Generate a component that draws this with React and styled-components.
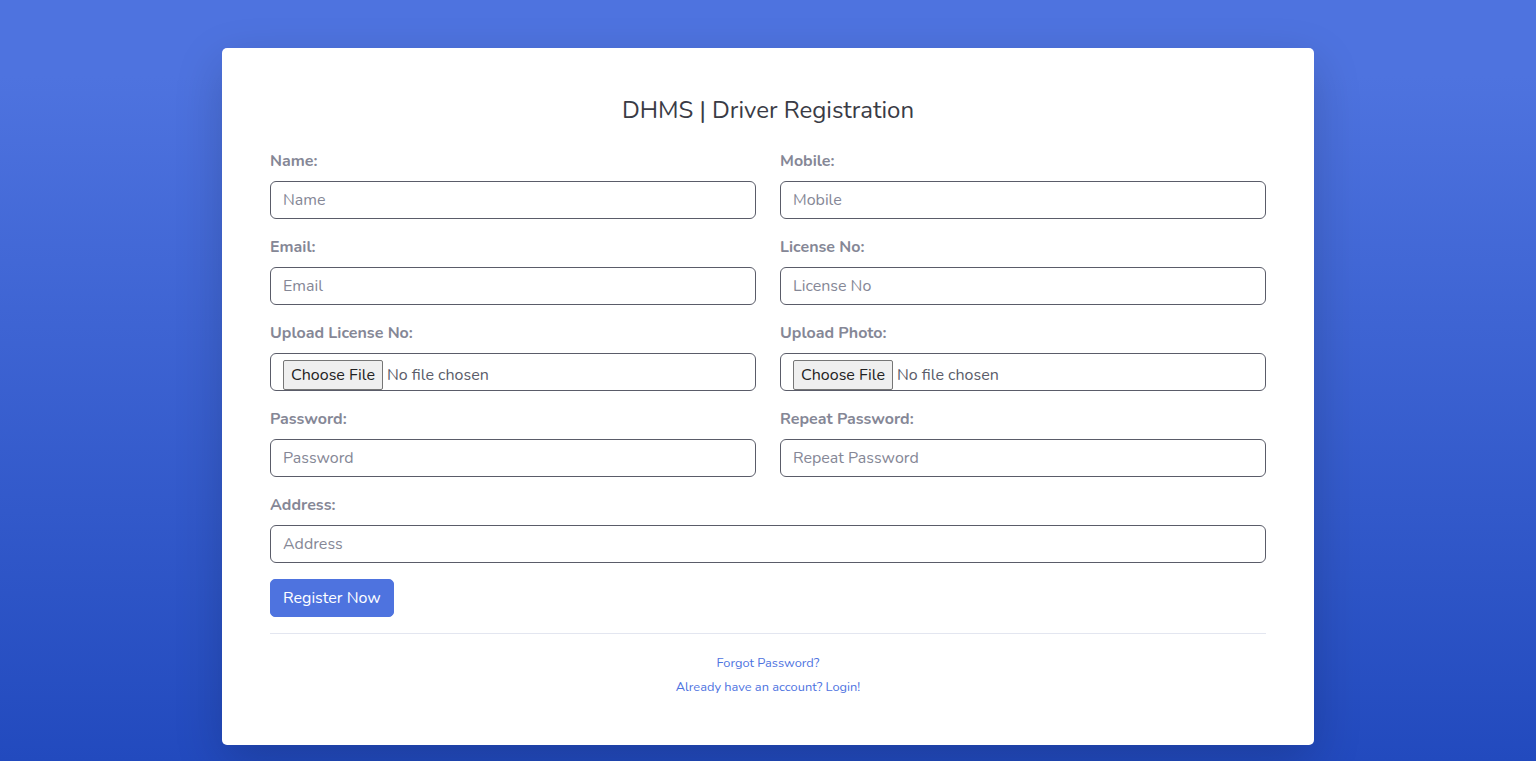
import React from 'react'
import styled, { createGlobalStyle } from 'styled-components'

const GlobalStyle = createGlobalStyle`
    * { box-sizing: border-box; }
    html, body { margin: 0; height: 100%; }
    body {
        font-family: "Nunito", "Lato", "Noto Sans", sans-serif;
        background: linear-gradient(180deg, #4e73df 10%, #224abe 100%);
        background-attachment: fixed;
        min-height: 761px;
        color: #858796;
    }
`

const fields = [
    { label: 'Name:', placeholder: 'Name' },
    { label: 'Mobile:', placeholder: 'Mobile' },
    { label: 'Email:', placeholder: 'Email' },
    { label: 'License No:', placeholder: 'License No' },
    { label: 'Upload License No:', type: 'file' },
    { label: 'Upload Photo:', type: 'file' },
    { label: 'Password:', placeholder: 'Password', type: 'password' },
    { label: 'Repeat Password:', placeholder: 'Repeat Password', type: 'password' },
    { label: 'Address:', placeholder: 'Address', wide: true },
]

function App () {
    return (
        <>
            <GlobalStyle/>
            <Page>
                <Card>
                    <Title>DHMS | Driver Registration</Title>
                    <Form onSubmit={e => e.preventDefault()}>
                        <Grid>
                            {fields.map(f => (
                                <Group key={f.label} $wide={f.wide}>
                                    <Label>{f.label}</Label>
                                    {f.type === 'file'
                                        ? <FileInput type="file"/>
                                        : <Input type={f.type || 'text'} placeholder={f.placeholder}/>}
                                </Group>
                            ))}
                        </Grid>
                        <Button type="submit">Register Now</Button>
                    </Form>
                    <Divider/>
                    <LinkRow><SmallLink href="#">Forgot Password?</SmallLink></LinkRow>
                    <LinkRow><SmallLink href="#">Already have an account? Login!</SmallLink></LinkRow>
                </Card>
            </Page>
        </>
    )
}

const Page = styled.div`
    padding-top: 48px;
    display: flex;
    justify-content: center;
`
const Card = styled.div`
    width: 1092px;
    background: #fff;
    border-radius: 5px;
    padding: 48px 48px 47px;
    box-shadow: 0 1rem 3rem rgba(0, 0, 0, 0.175);
`
const Title = styled.h4`
    margin: 0 0 24px;
    text-align: center;
    font-size: 24px;
    font-weight: 400;
    line-height: 1.2;
    color: #3a3b45;
`
const Form = styled.form`
    margin: 0;
`
const Grid = styled.div`
    display: grid;
    grid-template-columns: 1fr 1fr;
    column-gap: 24px;
`
const Group = styled.div`
    grid-column: ${props => props.$wide ? '1 / -1' : 'auto'};
    margin-bottom: 16px;
`
const Label = styled.label`
    display: block;
    height: 24px;
    margin-bottom: 8px;
    font-size: 16px;
    line-height: 24px;
    font-weight: 700;
    color: #858796;
`
const Input = styled.input`
    display: block;
    width: 100%;
    height: 38px;
    padding: 6px 12px;
    font-family: inherit;
    font-size: 16px;
    color: #6e707e;
    background: #fff;
    border: 1px solid #5a5c69;
    border-radius: 6px;
    outline: none;
    &::placeholder { color: #858796; opacity: 1; }
`
const FileInput = styled(Input)`
    padding: 6px 12px 4px;
    color: #5a5c69;
    font-size: 16px;
    &::file-selector-button {
        font-family: inherit;
        font-size: 16px;
        color: #222;
        margin-right: 4px;
        padding: 1px 7px;
        height: 30px;
        background: #efefef;
        border: 1px solid #767676;
        border-radius: 2px;
    }
`
const Button = styled.button`
    height: 38px;
    padding: 6px 12px;
    font-family: inherit;
    font-size: 16px;
    color: #fff;
    background: #4e73df;
    border: 1px solid #4e73df;
    border-radius: 5px;
    cursor: pointer;
`
const Divider = styled.hr`
    margin: 16px 0;
    border: 0;
    border-top: 1px solid #e3e6f0;
`
const LinkRow = styled.div`
    height: 24px;
    text-align: center;
    line-height: 24px;
`
const SmallLink = styled.a`
    font-size: 12.8px;
    color: #4e73df;
    text-decoration: none;
`

export default App
